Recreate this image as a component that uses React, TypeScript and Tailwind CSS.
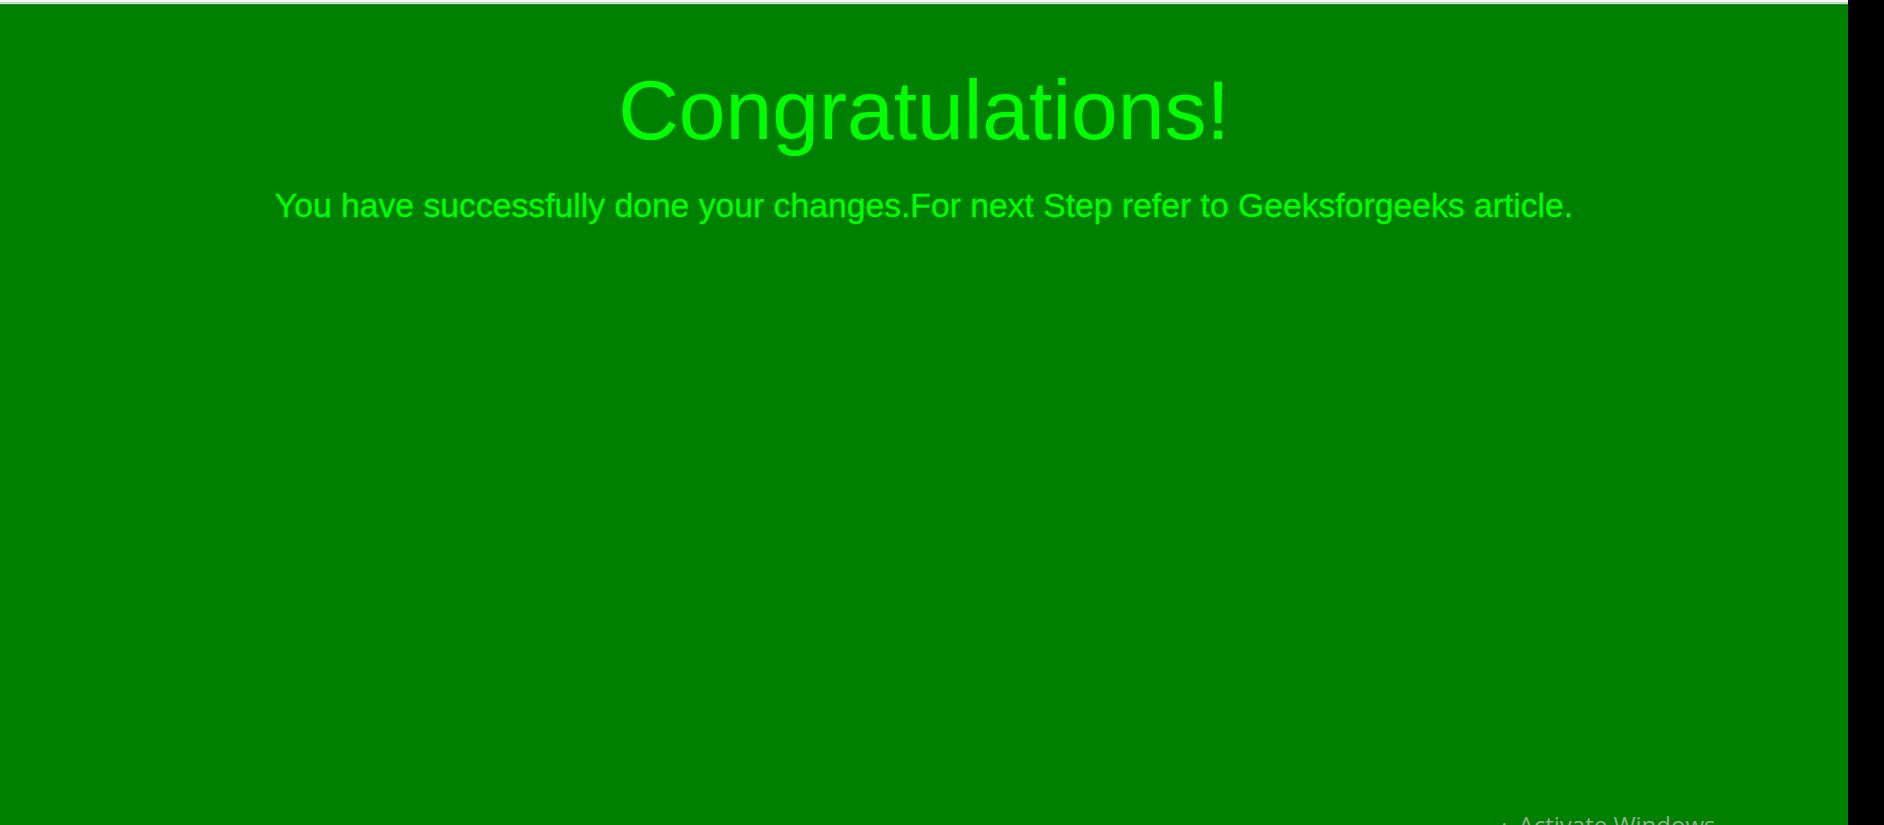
export default function App() {
    return (
        <div className="flex h-[825px] w-full overflow-hidden bg-black font-['Liberation_Sans',Arial,sans-serif]">
            <main className="relative flex flex-1 flex-col bg-[#008000]">
                <div className="h-[2px] bg-[#f2f5f2]" />
                <div className="h-[2px] bg-[#c4dcc4]" />
                <div className="h-[1px] bg-[#2f862f]" />
                <div className="flex flex-col items-center pt-[63px] text-[#00ff00]">
                    <h1 className="text-[84px] leading-none">Congratulations!</h1>
                    <p className="mt-[37px] text-[33.7px] leading-none [-webkit-text-stroke:0.3px_#00ff00]">
                        You have successfully done your changes.For next Step refer to Geeksforgeeks article.
                    </p>
                </div>
                <div className="absolute left-[1502px] top-[813px] flex items-start gap-[12px] whitespace-nowrap font-['Open_Sans',sans-serif] text-[24px] leading-none text-[#8fb08f]">
                    <span className="mt-[6px] text-[12px]">•</span>
                    <span>Activate Windows</span>
                </div>
            </main>
            <aside className="w-[36px] shrink-0 bg-black" />
        </div>
    );
}
